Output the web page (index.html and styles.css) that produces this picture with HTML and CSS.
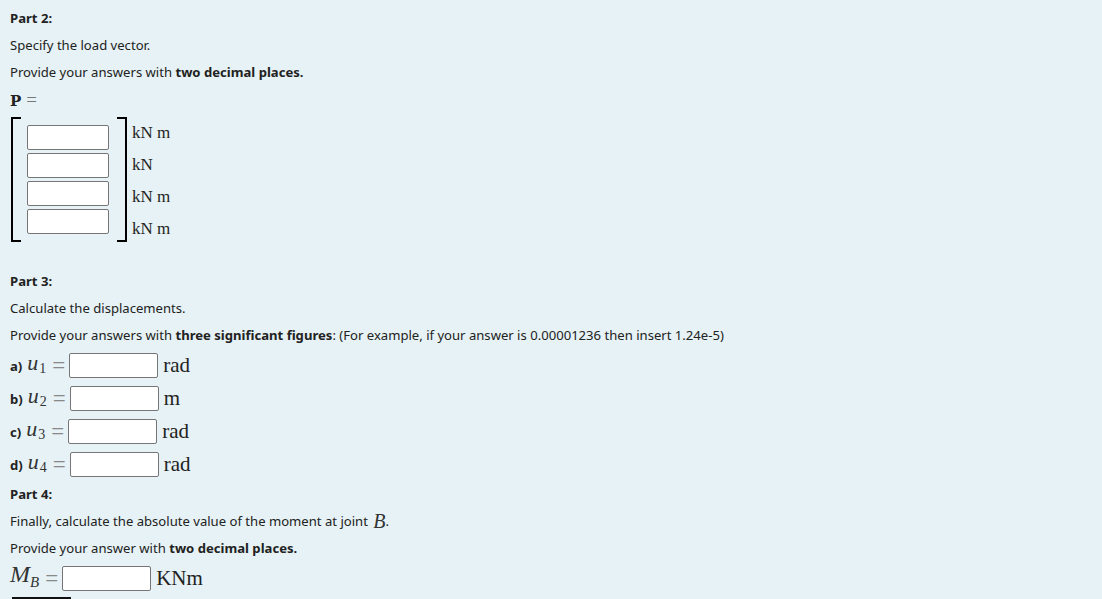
FILE: index.html
```html
<!DOCTYPE html>
<html lang="en">
<head>
<meta charset="utf-8">
<title>Parts 2-4</title>
<link rel="stylesheet" href="styles.css">
</head>
<body>
<div class="page">
  <p class="line part">Part 2:</p>
  <p class="line">Specify the load vector.</p>
  <p class="line">Provide your answers with <b>two decimal places.</b></p>
  <p class="mathline"><span class="bold-p">P</span><span class="eq-p">=</span></p>

  <div class="matrix">
    <div class="bracket left"></div>
    <div class="cells">
      <input class="cell" type="text">
      <input class="cell" type="text">
      <input class="cell" type="text">
      <input class="cell" type="text">
    </div>
    <div class="bracket right"></div>
    <div class="units">
      <span class="unit">kN m</span>
      <span class="unit">kN</span>
      <span class="unit">kN m</span>
      <span class="unit">kN m</span>
    </div>
  </div>

  <p class="line part part3">Part 3:</p>
  <p class="line">Calculate the displacements.</p>
  <p class="line">Provide your answers with <b>three significant figures</b>: (For example, if your answer is 0.00001236 then insert 1.24e-5)</p>

  <div class="answers">
    <div class="row"><b class="lbl">a)</b><span class="math"><span class="mi">u</span><span class="sub">1</span></span><span class="eq">=</span><input class="ans" type="text"><span class="unit-r">rad</span></div>
    <div class="row"><b class="lbl">b)</b><span class="math"><span class="mi">u</span><span class="sub">2</span></span><span class="eq">=</span><input class="ans" type="text"><span class="unit-r">m</span></div>
    <div class="row"><b class="lbl">c)</b><span class="math"><span class="mi">u</span><span class="sub">3</span></span><span class="eq">=</span><input class="ans" type="text"><span class="unit-r">rad</span></div>
    <div class="row"><b class="lbl">d)</b><span class="math"><span class="mi">u</span><span class="sub">4</span></span><span class="eq">=</span><input class="ans" type="text"><span class="unit-r">rad</span></div>
  </div>

  <p class="line part part4">Part 4:</p>
  <p class="line">Finally, calculate the absolute value of the moment at joint <span class="mi-b">B</span>.</p>
  <p class="line">Provide your answer with <b>two decimal places.</b></p>

  <div class="row mb-row"><span class="math"><span class="mi m">M</span><span class="sub subi">B</span></span><span class="eq eq-m">=</span><input class="ans" type="text"><span class="unit-r">KNm</span></div>

  <div class="cut-button"></div>
</div>
</body>
</html>
```

FILE: styles.css
```css
html, body {
  margin: 0;
  padding: 0;
  height: 100%;
  overflow: hidden;
  background: #e6f2f5;
}

.page {
  padding: 9px 10px 0 10px;
  font-family: "Noto Sans", "Open Sans", sans-serif;
  font-size: 13.1px;
  color: #222;
}

.line {
  margin: 0 0 9px 0;
  height: 18px;
  line-height: 18px;
  white-space: nowrap;
}

.part { font-weight: 700; }
b { font-weight: 700; }

.mathline {
  margin: 0;
  height: 20px;
  line-height: 20px;
  font-family: "DejaVu Serif", "Liberation Serif", serif;
  font-size: 15px;
}

.bold-p { font-weight: 700; }

.eq-p {
  font-family: "Liberation Serif", serif;
  font-size: 19px;
  color: #777;
  margin-left: 5px;
}

.matrix {
  display: flex;
  align-items: flex-start;
  margin: 7px 0 0 1px;
  height: 125px;
}

.bracket {
  width: 8px;
  height: 121px;
  border-top: 2px solid #000;
  border-bottom: 2px solid #000;
}
.bracket.left { border-left: 2px solid #000; }
.bracket.right { border-right: 2px solid #000; margin-left: 8px; }

.cells {
  display: flex;
  flex-direction: column;
  gap: 3px;
  padding-top: 8px;
  margin-left: 6px;
}

input {
  box-sizing: border-box;
  margin: 0;
  border: 1px solid #767676;
  border-radius: 2px;
  background: #fff;
  padding: 0;
}

.cell { width: 82px; height: 25px; }

.units {
  display: flex;
  flex-direction: column;
  margin-left: 5px;
  font-family: "Liberation Serif", "DejaVu Serif", serif;
  font-size: 17px;
}
.unit { height: 32px; line-height: 32px; }

.part3 { margin-top: 30px; }

.answers {
  display: flex;
  flex-direction: column;
  gap: 8px;
}

.row {
  display: flex;
  align-items: center;
  height: 25px;
}

.lbl { font-size: 13.1px; margin-right: 5px; }

.math {
  display: inline-block;
  font-family: "Liberation Serif", "DejaVu Serif", serif;
  line-height: 25px;
  white-space: nowrap;
  color: #333;
}

.mi {
  font-style: italic;
  font-size: 22px;
}

.sub {
  font-size: 14px;
  vertical-align: -3px;
  margin-left: 1px;
}
.subi { font-style: italic; font-size: 15px; margin-left: 0; vertical-align: -5px; }

.mi-b {
  font-family: "Liberation Serif", serif;
  font-style: italic;
  font-size: 20px;
  line-height: 10px;
  color: #333;
  margin-left: 2px;
  vertical-align: -2px;
}

.eq {
  font-family: "Liberation Serif", serif;
  font-size: 23px;
  line-height: 25px;
  color: #888;
  margin: 0 4px 0 6px;
}
.eq-m { margin: 0 4px 0 6px; }

.ans { width: 89px; height: 25px; }

.unit-r {
  font-family: "Liberation Serif", "DejaVu Serif", serif;
  font-size: 21px;
  margin-left: 5px;
  color: #222;
}

.part4 { margin-top: 8px; }

.mi.m { font-size: 24px; }

.cut-button {
  margin: 6px 0 0 2px;
  width: 59px;
  height: 20px;
  border-top: 3px solid #111;
}
```
